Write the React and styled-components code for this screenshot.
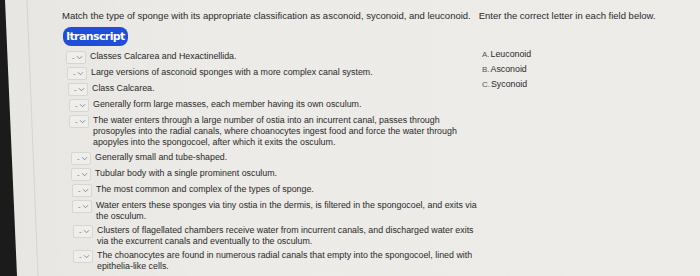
import styled, { createGlobalStyle } from 'styled-components';

const GlobalStyle = createGlobalStyle`
    html, body {
        margin: 0;
        padding: 0;
        background: #ebeae6;
    }
    * { box-sizing: border-box; }
`;

const items = [
    { text: 'Classes Calcarea and Hexactinellida.', shift: 0 },
    { text: 'Large versions of asconoid sponges with a more complex canal system.', shift: 1 },
    { text: 'Class Calcarea.', shift: 2 },
    { text: 'Generally form large masses, each member having its own osculum.', shift: 3 },
    { text: ['The water enters through a large number of ostia into an incurrent canal, passes through', 'prosopyles into the radial canals, where choanocytes ingest food and force the water through', 'apopyles into the spongocoel, after which it exits the osculum.'], shift: 3, gapAfter: true },
    { text: 'Generally small and tube-shaped.', shift: 5 },
    { text: 'Tubular body with a single prominent osculum.', shift: 5 },
    { text: 'The most common and complex of the types of sponge.', shift: 6 },
    { text: ['Water enters these sponges via tiny ostia in the dermis, is filtered in the spongocoel, and exits via', 'the osculum.'], shift: 6 },
    { text: ['Clusters of flagellated chambers receive water from incurrent canals, and discharged water exits', 'via the excurrent canals and eventually to the osculum.'], shift: 7 },
    { text: ['The choanocytes are found in numerous radial canals that empty into the spongocoel, lined with', 'epithelia-like cells.'], shift: 7 },
];

const answers = [
    { letter: 'A.', name: 'Leuconoid' },
    { letter: 'B.', name: 'Asconoid' },
    { letter: 'C.', name: 'Syconoid' },
];

const App = () => {
    return (
        <>
            <GlobalStyle />
            <Screen>
                <Bezel viewBox="0 0 40 276" preserveAspectRatio="none">
                    <polygon points="0,0 5,0 17,276 0,276" fill="#1b1b1b" />
                    <line x1="27" y1="0" x2="38" y2="276" stroke="#cfcfcb" strokeWidth="0.8" />
                </Bezel>
                <Question>
                    Match the type of sponge with its appropriate classification as asconoid, syconoid, and leuconoid.&nbsp;&nbsp; Enter the correct letter in each field below.
                </Question>
                <TranscriptBtn>ltranscript</TranscriptBtn>
                <Body>
                    <List>
                        {items.map((item, i) => (
                            <Row key={i} $shift={item.shift} $gapAfter={item.gapAfter}>
                                <SelectBox>
                                    <Dash>-</Dash>
                                    <Chevron viewBox="0 0 8 6">
                                        <path d="M1 1.5 L4 4.5 L7 1.5" fill="none" stroke="#6b7a99" strokeWidth="1" />
                                    </Chevron>
                                </SelectBox>
                                <ItemText>
                                    {Array.isArray(item.text)
                                        ? item.text.map((line, j) => <div key={j}>{line}</div>)
                                        : item.text}
                                </ItemText>
                            </Row>
                        ))}
                    </List>
                    <Answers>
                        {answers.map(a => (
                            <Answer key={a.letter}>
                                <Letter>{a.letter}</Letter>
                                <Name>{a.name}</Name>
                            </Answer>
                        ))}
                    </Answers>
                </Body>
            </Screen>
        </>
    );
};
export default App;

const Screen = styled.div`
    position: relative;
    width: 700px;
    height: 276px;
    overflow: hidden;
    padding: 10px 0 0 62px;
    background: linear-gradient(90deg, #e7e6e2 0%, #ecebe7 30%, #edece9 100%);
    font-family: "Liberation Sans", Arial, sans-serif;
    color: #2e2e2e;
`;

const Bezel = styled.svg`
    position: absolute;
    left: 0;
    top: 0;
    width: 40px;
    height: 276px;
`;

const Question = styled.div`
    font-size: 9.5px;
    line-height: 11px;
    white-space: nowrap;
    color: #2a2a2a;
`;

const TranscriptBtn = styled.div`
    display: inline-flex;
    align-items: center;
    justify-content: center;
    margin: 6px 0 0 1px;
    width: 65px;
    height: 19px;
    border-radius: 8px;
    background: #1f4fd8;
    color: #fff;
    font-family: "DejaVu Sans", sans-serif;
    font-weight: bold;
    font-size: 11px;
    letter-spacing: -0.6px;
`;

const Body = styled.div`
    display: flex;
    margin-top: 5px;
`;

const List = styled.div`
    display: flex;
    flex-direction: column;
    gap: 3px;
    width: 420px;
`;

const Row = styled.div`
    display: flex;
    align-items: flex-start;
    gap: 4px;
    padding-left: ${props => 4 + props.$shift}px;
    margin-bottom: ${props => (props.$gapAfter ? 1 : 0)}px;
`;

const SelectBox = styled.div`
    display: flex;
    align-items: center;
    justify-content: space-between;
    flex-shrink: 0;
    width: 20px;
    height: 13px;
    padding: 0 2px 0 5px;
    border: 1px solid #d6d6d2;
    border-radius: 2px;
    background: #efeeeb;
`;

const Dash = styled.span`
    font-size: 8px;
    color: #777;
    line-height: 1;
`;

const Chevron = styled.svg`
    width: 7px;
    height: 5px;
`;

const ItemText = styled.div`
    font-size: 8.85px;
    line-height: 11px;
    white-space: nowrap;
    color: #2a2a2a;
`;

const Answers = styled.div`
    display: flex;
    flex-direction: column;
    gap: 5px;
    margin-top: -2px;
    width: 100px;
`;

const Answer = styled.div`
    display: flex;
    align-items: baseline;
    gap: 1px;
`;

const Letter = styled.span`
    font-size: 8px;
    color: #555;
`;

const Name = styled.span`
    font-size: 8.8px;
    color: #2a2a2a;
`;
